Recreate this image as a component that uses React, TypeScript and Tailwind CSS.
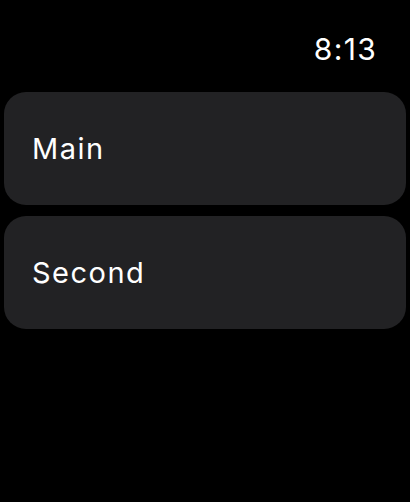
import React from "react";

export default function App() {
  return (
    <div
      className="w-[410px] h-[502px] bg-black text-white overflow-hidden"
      style={{ fontFamily: "Inter, 'Noto Sans', sans-serif" }}
    >
      <div className="flex justify-end pr-[33px] pt-[31px] h-[92px]">
        <span className="text-[30px] leading-[36px] font-normal tracking-[1.3px]">8:13</span>
      </div>
      <div className="flex flex-col gap-[11px] px-[4px]">
        <div className="h-[113px] rounded-[22px] bg-[#222224] flex items-center pl-[28px]">
          <span className="text-[29px] leading-[34px] tracking-[1.5px]">Main</span>
        </div>
        <div className="h-[113px] rounded-[22px] bg-[#222224] flex items-center pl-[28px]">
          <span className="text-[29px] leading-[34px] tracking-[1.5px]">Second</span>
        </div>
      </div>
    </div>
  );
}
